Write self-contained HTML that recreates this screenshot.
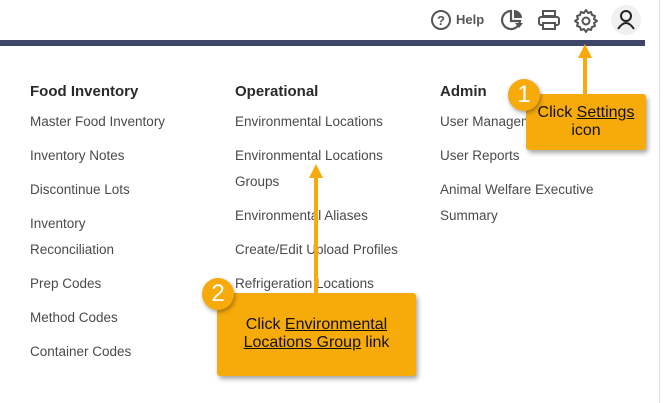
<!DOCTYPE html><html><head><style>
body{margin:0;width:663px;height:403px;background:#fff;font-family:"Liberation Sans",sans-serif;position:relative;overflow:hidden}
.a{position:absolute}
h3{position:absolute;margin:0;font-size:15px;font-weight:bold;color:#2a2a2a}
.l{position:absolute;font-size:13.5px;color:#4a4a4a;white-space:nowrap}
.box{position:absolute;background:#f6ab0b;box-shadow:2px 3px 5px rgba(0,0,0,.35);border-radius:3px;text-align:center;font-size:16px;color:#111;line-height:18px}
.c{position:absolute;width:32px;height:32px;border-radius:50%;background:#f6ab0b;box-shadow:1px 2px 4px rgba(0,0,0,.35);color:#fff;font-size:24px;text-align:center;line-height:32px}
u{text-decoration:underline}
</style></head><body>
<div class="a" style="left:0;top:40px;width:645px;height:6px;background:#3d4666"></div>
<div class="a" style="left:659px;top:0;width:1px;height:403px;background:#ddd"></div>
<svg class="a" style="left:430px;top:8px" width="30" height="26"><circle cx="11" cy="12" r="9" fill="none" stroke="#555" stroke-width="2"/><text x="11" y="17" font-size="13" font-weight="bold" fill="#555" text-anchor="middle" font-family="Liberation Sans">?</text></svg>
<div class="a" style="left:456px;top:12px;font-size:13px;font-weight:bold;color:#555">Help</div>
<svg class="a" style="left:500px;top:8px" width="26" height="26"><path d="M11 3 A9 9 0 1 0 20 13 L11 13 Z" fill="none" stroke="#555" stroke-width="2.2"/><path d="M14 2 A8 8 0 0 1 22 10 L14 10 Z" fill="#555"/><path d="M15 15 L23 15 L19 20 Z" fill="#555"/></svg>
<svg class="a" style="left:537px;top:9px" width="26" height="24"><rect x="6" y="2" width="12" height="5" fill="none" stroke="#555" stroke-width="2"/><rect x="2" y="8" width="20" height="8" rx="2" fill="none" stroke="#555" stroke-width="2"/><rect x="6" y="14" width="12" height="6" fill="#fff" stroke="#555" stroke-width="2"/></svg>
<svg class="a" style="left:573px;top:8px" width="26" height="26"><path d="M13 2 l2 3 3-1 1 3 3 1-1 3 3 2-3 2 1 3-3 1-1 3-3-1-2 3-2-3-3 1-1-3-3-1 1-3-3-2 3-2-1-3 3-1 1-3 3 1z" fill="none" stroke="#555" stroke-width="2" stroke-linejoin="round"/><circle cx="13" cy="13" r="3.5" fill="none" stroke="#555" stroke-width="2"/></svg>
<div class="a" style="left:611px;top:5px;width:30px;height:30px;border-radius:50%;background:#f0f0f0"></div>
<svg class="a" style="left:611px;top:5px" width="30" height="30"><circle cx="15" cy="11" r="5" fill="none" stroke="#222" stroke-width="2"/><path d="M7 24 Q15 12 23 24" fill="none" stroke="#222" stroke-width="2"/></svg>

<h3 style="left:30px;top:83px">Food Inventory</h3>
<div class="l" style="left:30px;top:114px">Master Food Inventory</div>
<div class="l" style="left:30px;top:148px">Inventory Notes</div>
<div class="l" style="left:30px;top:182px">Discontinue Lots</div>
<div class="l" style="left:30px;top:216px">Inventory</div>
<div class="l" style="left:30px;top:242px">Reconciliation</div>
<div class="l" style="left:30px;top:276px">Prep Codes</div>
<div class="l" style="left:30px;top:310px">Method Codes</div>
<div class="l" style="left:30px;top:344px">Container Codes</div>

<h3 style="left:235px;top:83px">Operational</h3>
<div class="l" style="left:235px;top:114px">Environmental Locations</div>
<div class="l" style="left:235px;top:148px">Environmental Locations</div>
<div class="l" style="left:235px;top:174px">Groups</div>
<div class="l" style="left:235px;top:208px">Environmental Aliases</div>
<div class="l" style="left:235px;top:242px">Create/Edit Upload Profiles</div>
<div class="l" style="left:235px;top:276px">Refrigeration Locations</div>

<h3 style="left:440px;top:83px">Admin</h3>
<div class="l" style="left:440px;top:114px">User Management</div>
<div class="l" style="left:440px;top:148px">User Reports</div>
<div class="l" style="left:440px;top:182px">Animal Welfare Executive</div>
<div class="l" style="left:440px;top:208px">Summary</div>

<svg class="a" style="left:0;top:0" width="663" height="403"><g fill="#f6ab0b" stroke="none"><rect x="583" y="55" width="4" height="40"/><path d="M585 44 L578 58 L592 58 Z"/><rect x="314" y="175" width="4" height="120"/><path d="M316 164 L309 178 L323 178 Z"/></g></svg>

<div class="box" style="left:526px;top:94px;width:120px;height:56px;padding-top:10px;box-sizing:border-box">Click <u>Settings </u><br>icon</div>
<div class="c" style="left:508px;top:79px">1</div>
<div class="box" style="left:217px;top:293px;width:199px;height:83px;padding-top:23px;box-sizing:border-box">Click <u>Environmental </u><br><u>Locations Group</u> link</div>
<div class="c" style="left:202px;top:278px">2</div>
</body></html>
